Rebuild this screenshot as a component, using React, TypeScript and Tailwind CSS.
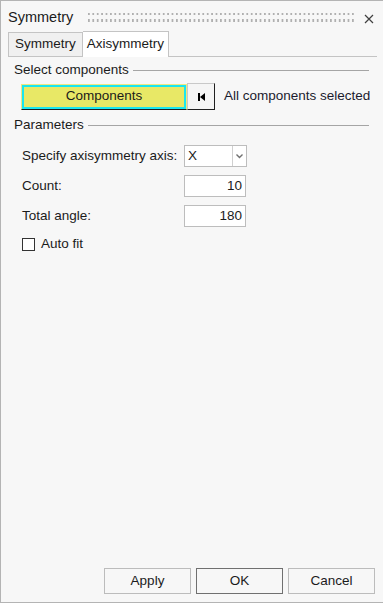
import React from "react";

const font = { fontFamily: '"Liberation Sans", Arial, sans-serif' };

function GroupHeader({ label }: { label: string }) {
  return (
    <div className="flex items-center h-[14px] pl-[13px] pr-[14px]">
      <span className="text-[13.5px] leading-none text-[#1b1b1b]">{label}</span>
      <div className="flex-1 h-px bg-[#a5a5a5] ml-[4px]" />
    </div>
  );
}

function NumberField({ label, value }: { label: string; value: string }) {
  return (
    <div className="flex items-center h-[22px] pl-[21px]">
      <span className="w-[162px] text-[13.5px] text-[#1b1b1b]">{label}</span>
      <div className="w-[62px] h-[22px] bg-white border border-[#bdbdbd] flex items-center justify-end pr-[3px] text-[13.5px] text-[#1b1b1b]">
        {value}
      </div>
    </div>
  );
}

export default function App() {
  return (
    <div
      style={font}
      className="w-[383px] h-[603px] bg-[#f7f7f7] border-l border-t border-b border-[#b4b4b4] flex flex-col overflow-hidden"
    >
      {/* title bar */}
      <div className="h-[30px] flex items-center pl-[7px] pr-[9px]">
        <span className="text-[14.5px] text-[#1b1b1b] pt-[3px]">Symmetry</span>
        <svg className="flex-1 ml-[15px] mr-[8px] h-[10px] mt-[4px]" shapeRendering="crispEdges">
          <defs>
            <pattern id="grip" width="4.4" height="7" patternUnits="userSpaceOnUse">
              <rect x="0" y="0" width="2" height="2" fill="#b0b0b0" />
              <rect x="0" y="6" width="2" height="2" fill="#b0b0b0" />
            </pattern>
          </defs>
          <rect width="100%" height="9" fill="url(#grip)" />
        </svg>
        <svg width="10" height="10" viewBox="0 0 10 10" className="mt-[5px]">
          <path d="M1 1 L9 9 M9 1 L1 9" stroke="#404040" strokeWidth="1.2" />
        </svg>
      </div>

      {/* tabs */}
      <div className="flex items-end h-[26px] pl-[7px] pr-[6px]">
        <div className="h-[25px] px-[6px] flex items-center text-[13.5px] text-[#1b1b1b] bg-[#f0f0f0] border border-[#c4c4c4]">
          Symmetry
        </div>
        <div className="h-[26px] px-[4px] flex items-center text-[13.5px] text-[#1b1b1b] bg-white border-t border-r border-[#c4c4c4]">
          Axisymmetry
        </div>
        <div className="flex-1 h-px bg-[#c4c4c4]" />
      </div>

      {/* content */}
      <div className="flex-1 flex flex-col pt-[6px]">
        <GroupHeader label="Select components" />

        <div className="flex items-center h-[27px] mt-[6px] pl-[20px]">
          <div className="w-[166px] h-[26px] border border-[#f0e880] border-b-[#202020]">
            <div className="w-full h-full border-[2px] border-[#19e6f0] bg-[#e8e866] flex items-center justify-center text-[13.5px] text-[#1b1b1b]">
              Components
            </div>
          </div>
          <div className="w-[28px] h-[27px] bg-[#f5f5f5] border border-[#c8c8c8] border-r-[#202020] border-b-[#202020] flex items-center justify-center">
            <svg width="7" height="8" viewBox="0 0 7 8">
              <rect x="0" y="0" width="2" height="8" fill="#000" />
              <path d="M7 0 L2 4 L7 8 Z" fill="#000" />
            </svg>
          </div>
          <span className="ml-[9px] text-[13.5px] text-[#1b1b2e]">All components selected</span>
        </div>

        <div className="mt-[8px]">
          <GroupHeader label="Parameters" />
        </div>

        <div className="flex items-center h-[22px] mt-[13px] pl-[21px]">
          <span className="w-[162px] text-[13.5px] text-[#1b1b1b]">Specify axisymmetry axis:</span>
          <div className="w-[63px] h-[22px] bg-white border border-[#bdbdbd] flex items-center">
            <span className="flex-1 pl-[3px] text-[13.5px] text-[#1b1b1b]">X</span>
            <div className="w-[14px] h-full border-l border-[#d0d0d0] flex items-center justify-center">
              <svg width="7" height="5" viewBox="0 0 7 5">
                <path d="M0.5 0.5 L3.5 3.5 L6.5 0.5" stroke="#707070" strokeWidth="1.4" fill="none" />
              </svg>
            </div>
          </div>
        </div>

        <div className="mt-[8px]">
          <NumberField label="Count:" value="10" />
        </div>
        <div className="mt-[8px]">
          <NumberField label="Total angle:" value="180" />
        </div>

        <div className="flex items-center h-[13px] mt-[11px] pl-[21px]">
          <div className="w-[13px] h-[13px] bg-white border border-[#333]" />
          <span className="ml-[6px] text-[13.5px] text-[#1b1b1b]">Auto fit</span>
        </div>

        <div className="flex-1" />

        <div className="flex justify-end gap-[5px] pr-[8px] pb-[8px]">
          <button className="w-[87px] h-[26px] bg-[#f7f7f7] border border-[#bcbcbc] text-[13.5px] text-[#1b1b1b]">
            Apply
          </button>
          <button className="w-[87px] h-[26px] bg-[#f7f7f7] border border-[#707070] text-[13.5px] text-[#1b1b1b]">
            OK
          </button>
          <button className="w-[87px] h-[26px] bg-[#f7f7f7] border border-[#bcbcbc] text-[13.5px] text-[#1b1b1b]">
            Cancel
          </button>
        </div>
      </div>
    </div>
  );
}
